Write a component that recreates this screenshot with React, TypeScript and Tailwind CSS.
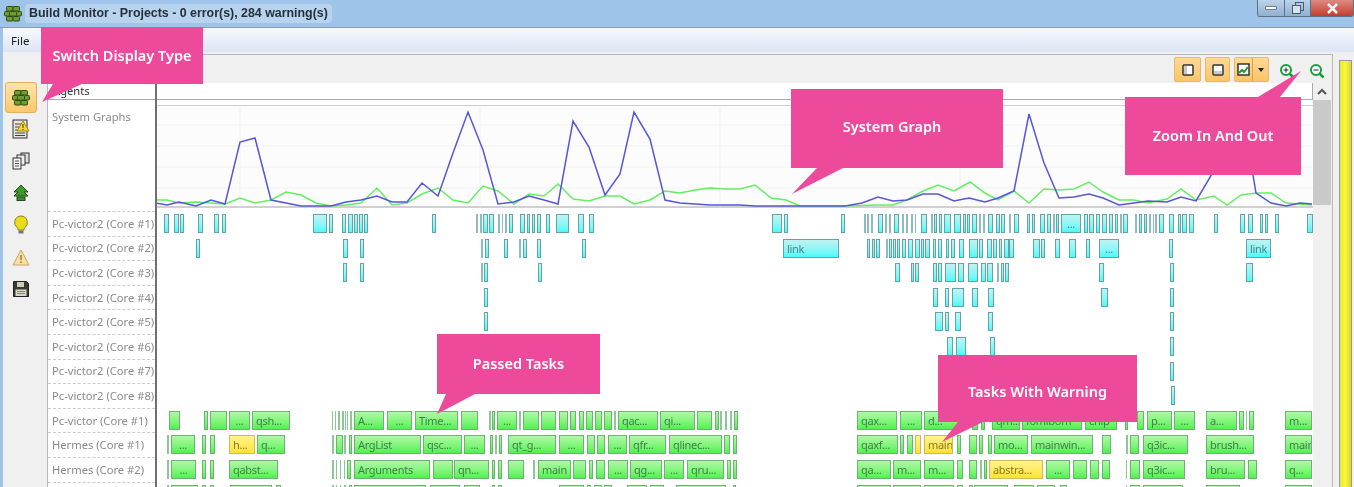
type Kind = "c" | "g" | "y";
// x (page px), width, optional label, optional kind override
type Task = [number, number, string?, Kind?];

const LEFT = 157;

const coreRows: Task[][] = [
  [[164,5],[174,5],[180,4],[198,5],[214,5],[222,4],[313,14],[329,4],[342,4],[348,5],[354,4],[359,4],[364,4],[432,4],[476,2],[480,2],[483,5],[489,5],[498,2],[502,1],[505,2],[509,4],[520,5],[527,3],[532,3],[537,4],[546,4],[556,13],[578,6],[589,5],[772,10],[784,4],[841,4],[864,2],[867,2],[871,2],[878,5],[885,2],[889,2],[894,5],[902,2],[906,2],[911,2],[915,1],[921,6],[931,2],[934,3],[939,3],[944,7],[954,7],[963,3],[967,3],[972,5],[979,2],[983,2],[988,5],[996,4],[1001,4],[1009,2],[1014,5],[1027,3],[1032,3],[1040,5],[1047,4],[1053,2],[1056,3],[1061,20,"..."],[1084,4],[1089,5],[1096,4],[1102,5],[1109,4],[1115,3],[1120,2],[1123,5],[1135,2],[1139,3],[1144,3],[1149,2],[1153,1],[1155,2],[1159,5],[1169,5],[1178,3],[1182,5],[1189,5],[1214,4],[1240,5],[1248,5],[1260,3],[1265,3],[1275,4],[1307,6]],
  [[196,4],[343,5],[360,4],[481,2],[485,4],[504,4],[519,2],[523,4],[537,4],[582,4],[783,56,"link"],[867,3],[872,3],[876,4],[886,2],[889,3],[893,3],[897,3],[902,4],[908,5],[915,5],[921,3],[925,5],[933,3],[938,4],[946,3],[951,4],[959,5],[969,9],[979,4],[987,5],[993,4],[999,3],[1004,5],[1009,5],[1033,7],[1041,4],[1055,5],[1069,7],[1086,4],[1099,20,"..."],[1169,4],[1246,25,"link"]],
  [[343,4],[360,4],[481,2],[484,4],[538,4],[895,5],[911,3],[915,4],[933,4],[938,4],[945,11],[958,6],[968,10],[981,5],[987,6],[997,2],[1001,3],[1005,4],[1099,5],[1170,4],[1246,7]],
  [[484,4],[933,5],[945,4],[952,12],[972,6],[988,6],[1101,7],[1170,4]],
  [[484,4],[935,8],[945,4],[955,6],[988,5],[1170,4]],
  [[947,6],[956,10],[990,5],[1170,4]],
  [[1170,4]],
  [[1171,4]],
];

const buildRows: Task[][] = [
  [[169,11],[204,4],[210,17],[229,21,"..."],[252,38,"qsh..."],[332,1],[335,1],[338,2],[342,2],[345,1],[347,1],[350,2],[354,30,"A..."],[387,25,"..."],[415,43,"Time..."],[461,17],[489,2],[492,3],[497,20,"..."],[519,2],[523,16],[541,15],[559,9],[570,6],[579,5],[586,7],[595,7],[604,8],[614,2],[618,40,"qac..."],[660,35,"qi..."],[697,15],[715,4],[720,2],[725,2],[730,2],[734,4],[857,40,"qax..."],[900,22,"..."],[924,40,"d..."],[972,6],[981,4],[992,28,"qm..."],[1022,60,"fomlbom"],[1085,32,"chip"],[1125,3],[1137,7],[1147,25,"p..."],[1174,21,"..."],[1206,31,"a..."],[1239,5],[1246,1],[1249,5],[1285,27,"m..."]],
  [[167,2],[171,24,"..."],[202,4],[210,5],[229,26,"h...","y"],[257,28,"q..."],[332,2],[336,7],[344,2],[349,3],[354,67,"ArgList"],[423,39,"qsc..."],[464,21,"..."],[490,3],[495,2],[499,3],[508,48,"qt_g..."],[559,25,"..."],[587,8],[597,8],[608,19,"..."],[629,37,"qfr..."],[669,53,"qlinec..."],[724,6],[733,4],[857,41,"qaxf..."],[900,4],[907,6],[915,6,undefined,"y"],[924,29,"main","y"],[957,4],[969,8],[979,4],[988,4],[994,34,"mo..."],[1031,62,"mainwin..."],[1102,9],[1126,2],[1130,9],[1143,45,"q3ic..."],[1206,48,"brush..."],[1285,27,"main"]],
  [[167,2],[171,25,"..."],[202,4],[210,4],[229,49,"qabst..."],[332,2],[336,1],[340,1],[344,1],[347,4],[354,76,"Arguments"],[433,20],[454,35,"qn..."],[492,3],[498,4],[508,16],[533,2],[538,33,"main"],[573,13],[589,4],[596,9],[608,20,"..."],[630,32,"qg..."],[664,20,"..."],[687,37,"qru..."],[727,4],[733,4],[857,34,"qa..."],[893,28,"m..."],[924,30,"m..."],[957,6],[969,8],[980,2],[984,3],[989,54,"abstra...","y"],[1046,24,"..."],[1073,14],[1090,9],[1102,8],[1126,1],[1130,10],[1143,42,"q3ic..."],[1206,39,"bru..."],[1248,9],[1285,27,"q..."]],
  [[167,2],[171,27],[202,4],[210,4],[230,42],[276,5],[332,2],[336,1],[340,1],[344,2],[349,3],[354,72],[430,30],[464,16],[492,3],[498,4],[559,25],[587,4],[594,8],[604,8],[627,20],[650,14],[676,50],[733,3],[857,34],[893,28],[924,30],[957,6],[969,4],[974,34],[1014,20],[1037,18],[1060,7],[1126,1],[1130,10],[1143,40],[1206,34],[1285,27]],
];

const names = ["Pc-victor2 (Core #1)","Pc-victor2 (Core #2)","Pc-victor2 (Core #3)","Pc-victor2 (Core #4)","Pc-victor2 (Core #5)","Pc-victor2 (Core #6)","Pc-victor2 (Core #7)","Pc-victor2 (Core #8)","Pc-victor (Core #1)","Hermes (Core #1)","Hermes (Core #2)",""];

const bluePts = "156,203 167,205 179,202 196,206 211,200 225,204 240,142 255,138 271,200 286,203 301,206 316,206 331,206 346,202 361,200 377,196 392,202 407,202 422,183 438,196 453,153 468,112 483,150 498,204 514,202 529,196 544,200 558,204 573,121 589,147 605,195 620,174 634,112 650,139 665,200 680,203 695,204 710,205 725,205 740,205 755,206 771,206 790,206 845,206 862,203 878,197 893,201 907,200 923,194 938,194 954,201 969,198 985,202 998,198 1014,191 1029,114 1044,163 1059,198 1074,197 1089,194 1103,198 1119,205 1134,203 1148,201 1167,202 1181,197 1196,201 1212,174 1227,130 1243,130 1253,175 1256,193 1271,203 1286,206 1300,203 1312,204";
const greenPts = "156,200 167,200 179,203 196,202 211,203 225,204 240,198 255,203 271,200 286,192 301,195 316,203 331,206 346,205 361,203 377,188 392,205 407,203 422,194 438,188 453,200 468,203 483,186 498,191 514,204 529,194 544,196 558,184 573,199 589,201 605,196 620,196 634,204 650,200 665,191 680,193 695,190 710,188 725,189 740,189 755,185 771,198 786,200 800,206 845,206 878,205 893,205 907,200 923,191 938,185 954,191 970,182 985,193 998,200 1014,191 1029,203 1044,189 1059,190 1074,189 1089,182 1103,192 1119,200 1134,200 1148,203 1167,199 1181,189 1196,200 1214,196 1227,205 1241,195 1256,193 1271,193 1286,203 1312,205";

function TaskBlock({ task, base }: { task: Task; base: Kind }) {
  const [x, w, label, kind = base] = task;
  const look =
    kind === "c"
      ? w > 2
        ? "border border-[#62a4a8] bg-linear-to-b from-[#bff2f2] to-[#45fafa] text-[#4a858a]"
        : "bg-[#8dbcbd]"
      : kind === "g"
        ? w > 2
          ? "border border-[#6fb076] bg-linear-to-b from-[#aef8a6] to-[#4cf24c] text-[#3f7f4a]"
          : "bg-[#8cc794]"
        : "border border-[#cdbb5a] bg-linear-to-b from-[#fff38a] to-[#ffe32c] text-[#857a22]";
  // short tasks have no label, so no padding either
  const align = !label ? "" : label === "..." ? "justify-center" : "pl-[3px]";
  return (
    <div
      className={`absolute top-[1px] h-[19px] flex items-center overflow-hidden whitespace-nowrap text-[11px] tracking-[-0.3px] leading-none ${look} ${align}`}
      style={{ left: x - LEFT, width: w }}
    >
      {label}
    </div>
  );
}

function Bricks() {
  return (
    <svg width="20" height="18" viewBox="0 0 20 18">
      <g fill="#6f9e2e" stroke="#2f4a18" strokeWidth="1">
        <rect x="3.500" y="1.500" width="6.500" height="4.500" rx="1" />
        <rect x="10" y="1.500" width="6.500" height="4.500" rx="1" />
        <rect x="1.500" y="6.500" width="5" height="4.500" rx="1" />
        <rect x="6.500" y="6.500" width="7" height="4.500" rx="1" />
        <rect x="13.500" y="6.500" width="5" height="4.500" rx="1" />
        <rect x="3.500" y="11.500" width="6.500" height="4.500" rx="1" />
        <rect x="10" y="11.500" width="6.500" height="4.500" rx="1" />
      </g>
    </svg>
  );
}

function LeftTools() {
  return (
    <div className="w-[44px] shrink-0 flex flex-col items-start pt-[30px] pl-[2px]">
      <div className="w-[32px] h-[31px] rounded-[3px] border border-[#e0b060] bg-linear-to-b from-[#fde3a8] to-[#fcc869] flex items-center justify-center">
        <Bricks />
      </div>
      <div className="w-[32px] h-[32px] flex items-center justify-center">
        <svg width="18" height="20" viewBox="0 0 18 20">
          <rect x="1" y="1" width="14" height="18" fill="#e8e4d8" stroke="#333" />
          <path d="M3 5h10M3 8h6M3 11h6M3 14h10M3 16.500h10" stroke="#444" />
          <path d="M11 2l6 10h-12z" fill="#f4d82c" stroke="#a88a10" />
          <path d="M11 5v4M11 10v1" stroke="#333" />
        </svg>
      </div>
      <div className="w-[32px] h-[32px] flex items-center justify-center">
        <svg width="18" height="18" viewBox="0 0 18 18">
          <rect x="9" y="1" width="8" height="10" fill="#ddd" stroke="#333" />
          <rect x="5" y="3" width="8" height="10" fill="#eee" stroke="#333" />
          <rect x="1" y="6" width="8" height="11" fill="#f4f4f4" stroke="#333" />
          <path d="M3 9h4M3 11.500h4M3 14h4" stroke="#555" />
        </svg>
      </div>
      <div className="w-[32px] h-[32px] flex items-center justify-center">
        <svg width="18" height="18" viewBox="0 0 18 18">
          <path d="M9 1l7 7h-4l4 4H2l4-4H2z" fill="#3f9a2c" stroke="#1f4f18" />
          <rect x="5" y="13" width="8" height="3.500" fill="#3f8a2c" stroke="#1f4f18" />
        </svg>
      </div>
      <div className="w-[32px] h-[32px] flex items-center justify-center">
        <svg width="16" height="20" viewBox="0 0 16 20">
          <path d="M8 1a6.500 6.500 0 0 0-4 11.500c.8.8 1 1.500 1 2.500h6c0-1 .2-1.700 1-2.500A6.500 6.500 0 0 0 8 1z" fill="#e8dc1c" stroke="#8a8420" />
          <rect x="5.500" y="15.500" width="5" height="3" fill="#777" />
        </svg>
      </div>
      <div className="w-[32px] h-[32px] flex items-center justify-center">
        <svg width="18" height="17" viewBox="0 0 18 17">
          <path d="M9 1l8 15H1z" fill="#f6dfa0" stroke="#c8a860" />
          <path d="M9 6v5M9 12.500v1.500" stroke="#a07840" strokeWidth="1.500" />
        </svg>
      </div>
      <div className="w-[32px] h-[32px] flex items-center justify-center">
        <svg width="18" height="18" viewBox="0 0 18 18">
          <path d="M1.500 1.500h13l2 2v13h-15z" fill="#3a3a32" stroke="#222" />
          <rect x="5" y="2" width="7" height="5" fill="#cfcfb8" />
          <rect x="3.500" y="9.500" width="11" height="6.500" fill="#d8d8c0" />
          <path d="M5 11.500h8M5 13.500h8" stroke="#888" />
        </svg>
      </div>
    </div>
  );
}

function Callout({ box, text, tail }: { box: string; text: string; tail: string }) {
  return (
    <>
      <div className={`absolute flex items-center justify-center bg-[#ee4a9b] text-white font-semibold text-[14.5px] ${box}`}>
        {text}
      </div>
      <svg className="absolute left-0 top-0 pointer-events-none" width="1354" height="487">
        <polygon points={tail} fill="#ee4a9b" />
      </svg>
    </>
  );
}

export default function App() {
  return (
    <div className="relative w-[1354px] h-[487px] overflow-hidden flex flex-col bg-[#f0f0f0] font-['Noto_Sans',sans-serif] blur-[0.4px]">
      {/* title bar */}
      <div className="h-[28px] shrink-0 bg-[#9fc4e9] border-b border-[#8a9bb0] flex items-center pl-[3px] relative">
        <Bricks />
        <span className="ml-[2px] font-['Liberation_Sans',sans-serif] font-bold text-[12.4px] text-[#25303c] bg-white/25 px-1 rounded-sm">
          Build Monitor - Projects - 0 error(s), 284 warning(s)
        </span>
        <div className="absolute top-0 left-[1257px] h-[17px] flex rounded-b-[3px] overflow-hidden border border-t-0 border-[#5d7186]">
          <div className="w-[26px] bg-linear-to-b from-[#bcd3e8] to-[#8fb0d0] flex items-center justify-center">
            <div className="w-[12px] h-[4px] rounded-[1px] bg-white border border-[#6d7f90]" />
          </div>
          <div className="w-[27px] bg-linear-to-b from-[#bcd3e8] to-[#8fb0d0] border-x border-[#5d7186] flex items-center justify-center">
            <svg width="12" height="12" viewBox="0 0 12 12">
              <rect x="3.500" y="0.500" width="8" height="8" fill="none" stroke="#4a5a6a" />
              <rect x="0.500" y="3.500" width="8" height="8" fill="#d6e3ee" stroke="#4a5a6a" />
            </svg>
          </div>
          <div className="w-[42px] bg-linear-to-b from-[#dc8a80] to-[#c23a2e] flex items-center justify-center">
            <svg width="13" height="11" viewBox="0 0 13 11">
              <path d="M2 1l9 9M11 1l-9 9" stroke="#f4f4f4" strokeWidth="2.500" />
            </svg>
          </div>
        </div>
      </div>

      {/* menu bar */}
      <div className="h-[24px] shrink-0 border-l-[3px] border-[#9fc4e9] bg-linear-to-b from-[#f7f9fe] to-[#dce5f4] flex items-center pl-[8px] pt-[2px] text-[11.5px] text-[#222]">
        File
      </div>

      <div className="flex-1 min-h-0 flex border-l-[3px] border-[#9fc4e9]">
        <LeftTools />

        <div className="w-[1286px] shrink-0 mt-[2px] border-t border-x border-[#b8b8b8] flex flex-col">
          {/* top toolbar */}
          <div className="h-[28px] shrink-0 flex items-start pl-[1126px] pt-[2px]">
            <div className="w-[27px] h-[25px] rounded-[2px] border border-[#e8b868] bg-linear-to-b from-[#fdd898] to-[#fbc566] flex items-center justify-center">
              <svg width="12" height="12" viewBox="0 0 12 12">
                <rect x="1" y="1" width="10" height="10" rx="1" fill="#fff" stroke="#333" strokeWidth="1.500" />
                <rect x="2" y="2" width="3" height="8" fill="#c9c9c9" />
              </svg>
            </div>
            <div className="ml-[4px] w-[25px] h-[25px] rounded-[2px] border border-[#e8b868] bg-linear-to-b from-[#fdd898] to-[#fbc566] flex items-center justify-center">
              <svg width="12" height="12" viewBox="0 0 12 12">
                <rect x="1" y="1" width="10" height="10" rx="1" fill="#fff" stroke="#333" strokeWidth="1.500" />
                <rect x="2" y="7" width="8" height="3" fill="#c9c9c9" />
              </svg>
            </div>
            <div className="ml-[4px] h-[25px] flex rounded-[2px] border border-[#e8b868] bg-linear-to-b from-[#fdd898] to-[#fbc566]">
              <div className="w-[18px] border-r border-[#d8a050] flex items-center justify-center">
                <svg width="13" height="13" viewBox="0 0 13 13">
                  <rect x="1" y="1" width="11" height="11" fill="#fff" stroke="#333" strokeWidth="1.500" />
                  <path d="M2 10l3-3 2 2 4-5" fill="none" stroke="#1f9a2a" strokeWidth="2" />
                </svg>
              </div>
              <div className="w-[15px] flex items-center justify-center">
                <div className="border-x-[3px] border-t-[4px] border-x-transparent border-t-[#222]" />
              </div>
            </div>
            <svg className="ml-[10px] mt-[6px]" width="16" height="16" viewBox="0 0 16 16">
              <circle cx="7" cy="7" r="5" fill="#fff" stroke="#12a03c" strokeWidth="2" />
              <path d="M4.500 7h5M7 4.500v5" stroke="#222" />
              <path d="M10.500 10.500l4 4" stroke="#12a03c" strokeWidth="2.500" />
            </svg>
            <svg className="ml-[14px] mt-[6px]" width="16" height="16" viewBox="0 0 16 16">
              <circle cx="7" cy="7" r="5" fill="#fff" stroke="#12a03c" strokeWidth="2" />
              <path d="M4.500 7h5" stroke="#222" />
              <path d="M10.500 10.500l4 4" stroke="#12a03c" strokeWidth="2.500" />
            </svg>
          </div>

          <div className="flex-1 min-h-0 flex">
            {/* agent names */}
            <div className="w-[109px] shrink-0 border-r-2 border-[#707070] bg-white text-[#8a8a8a] text-[11.2px]">
              <div className="h-[17px] border-b border-[#aaa] pl-[5px] pt-[1px] flex items-center text-[#333]">Agents</div>
              <div className="h-[111px] pl-[4px] pt-[11px] leading-none">System Graphs</div>
              {names.map((n, i) => (
                <div key={i} className="h-[24.6px] border-t border-dashed border-[#ccc] pl-[4px] pt-[1px] flex items-center whitespace-nowrap">
                  {n}
                </div>
              ))}
            </div>

            {/* timeline */}
            <div className="w-[1156px] shrink-0 bg-white overflow-hidden">
              <div className="h-[17px] border-b border-r border-[#aaa]" />
              <div className="h-[6px] border-b border-[#ccc]" />
              <div className="h-[102px] relative border-b-2 border-[#d0d0d0] bg-[#fcfcfc]">
                <svg className="absolute left-0 top-[-106px]" width="1156" height="210" viewBox="157 0 1156 210">
                  <path d="M157 125H1313M157 146H1313M157 167H1313M157 188H1313M240 107V207M480 107V207M720 107V207M960 107V207M1200 107V207" stroke="#f1f1f1" />
                  <polyline points={greenPts} fill="none" stroke="#63ee63" strokeWidth="1.500" />
                  <polyline points={bluePts} fill="none" stroke="#5656dc" strokeWidth="1.500" />
                </svg>
              </div>
              <div className="pt-[5px]">
                {coreRows.map((row, i) => (
                  <div key={i} className="relative h-[24.6px]">
                    {row.map((t, j) => (
                      <TaskBlock key={j} task={t} base="c" />
                    ))}
                  </div>
                ))}
                {buildRows.map((row, i) => (
                  <div key={i} className="relative h-[24.6px]">
                    {row.map((t, j) => (
                      <TaskBlock key={j} task={t} base="g" />
                    ))}
                  </div>
                ))}
              </div>
            </div>

            {/* scrollbar */}
            <div className="w-[18px] shrink-0 bg-[#f0f0f0] flex flex-col">
              <div className="h-[17px] flex items-center justify-center">
                <svg width="10" height="7" viewBox="0 0 10 7">
                  <path d="M1 6l4-4 4 4" fill="none" stroke="#555" strokeWidth="2" />
                </svg>
              </div>
              <div className="h-[105px] bg-[#c9c9c9]" />
            </div>
          </div>
        </div>

        {/* yellow health bar */}
        <div className="ml-[6px] mt-[8px] w-[13px] border-x border-t border-[#9a9a9a] bg-linear-to-r from-[#e8e83a] via-[#f8f83c] to-[#d8d830]" />
      </div>

      <Callout box="left-[41px] top-[27px] w-[162px] h-[57px]" text="Switch Display Type" tail="53,84 82,84 42,102" />
      <Callout box="left-[791px] top-[89px] w-[212px] h-[79px] pb-[3px] pr-[10px]" text="System Graph" tail="817,168 843,168 792,194" />
      <Callout box="left-[1125px] top-[97px] w-[176px] h-[78px]" text="Zoom In And Out" tail="1258,97 1280,97 1301,71" />
      <Callout box="left-[437px] top-[334px] w-[163px] h-[60px]" text="Passed Tasks" tail="446,394 475,394 437,414" />
      <Callout box="left-[938px] top-[355px] w-[199px] h-[67px] pt-[6px]" text="Tasks With Warning" tail="958,422 983,422 942,442" />
    </div>
  );
}
